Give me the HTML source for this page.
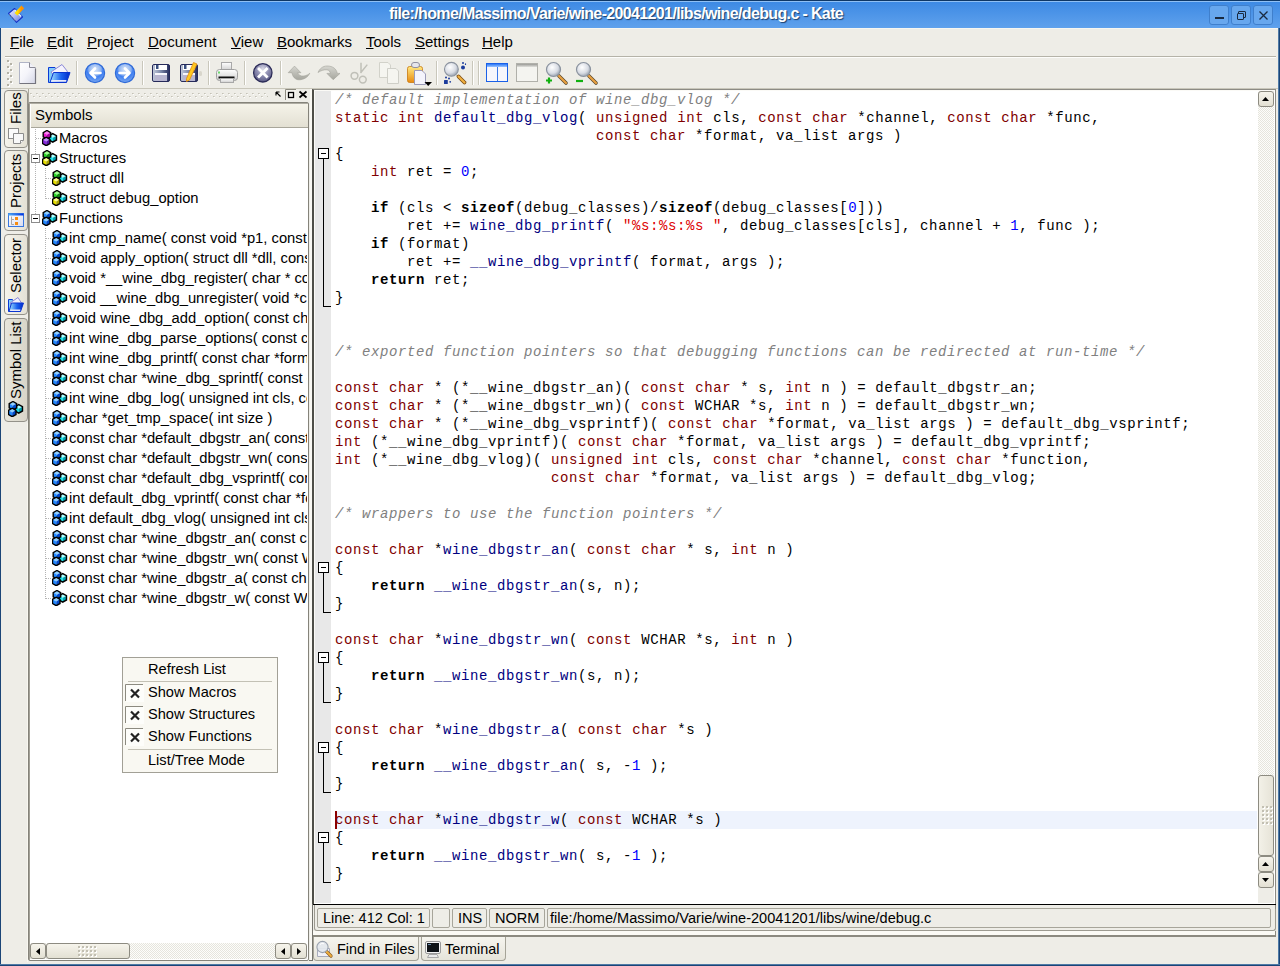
<!DOCTYPE html>
<html><head><meta charset="utf-8">
<style>
*{box-sizing:border-box}
html,body{margin:0;padding:0}
body{width:1280px;height:966px;position:relative;overflow:hidden;background:#eeede7;font-family:"Liberation Sans",sans-serif;font-size:15px;color:#000}
.a{position:absolute}
svg{position:absolute;overflow:visible}
#title{left:0;top:0;width:1280px;height:28px;background:linear-gradient(#3c89e4,#5fa1ec);border-top:1px solid #0e3766}
#title .t{left:389px;top:4px;white-space:nowrap;color:#fff;font-weight:bold;font-size:16px;letter-spacing:-0.64px;text-shadow:1px 1px 1px #1d3f6b}
.tb{top:4px;width:20px;height:20px;border:1px solid #3f7fcc;border-radius:3px;background:#67a7ee}
#menubar span{position:absolute;top:32.6px;white-space:nowrap}
#menubar u{text-decoration:underline;text-underline-offset:1px}
.vsep{position:absolute;top:61px;width:2px;height:24px;border-left:1px solid #c7c5b8;border-right:1px solid #fff}
#code{left:331px;top:91px;width:926px;height:812px;overflow:hidden}
.ln{position:absolute;left:4px;height:18px;white-space:pre;font-family:"Liberation Mono",monospace;font-size:14px;letter-spacing:0.6px;line-height:18px}
.k{color:#800000}.f{color:#000080}.b{font-weight:bold}.n{color:#0000ff}.s{color:#dd0000}.c{color:#808080;font-style:italic}
.vtab{left:4px;width:24px;border:1px solid #94928a;border-radius:4px;background:linear-gradient(90deg,#f6f4ec,#e4e1d5)}
.vtab .l{position:absolute;left:2px;white-space:nowrap;transform-origin:0 0;transform:rotate(-90deg);font-size:15px}
.tr{position:absolute;height:20px;white-space:nowrap;font-size:14.75px;line-height:20px}
.menu span{position:absolute;left:25px;white-space:nowrap;font-size:14.6px}
.sb{border:1px solid #8d8b81;border-radius:3px;background:linear-gradient(#f6f4ec,#e3e0d3)}
.sf{position:absolute;top:908px;height:20px;border:1px solid #a7a59a;border-radius:2px;font-size:14.55px;line-height:18px;padding-left:5px;white-space:nowrap;overflow:hidden}
</style></head><body>
<svg width="0" height="0" style="position:absolute;left:0;top:0"><defs>
<symbol id="cubem" viewBox="0 0 16 16">
<polygon points="10.75,3.60 14.50,5.72 10.75,7.85 7.00,5.72" fill="#b0ffff"/><polygon points="7.00,5.72 10.75,7.85 10.75,12.10 7.00,9.97" fill="#10e4ec"/><polygon points="10.75,7.85 14.50,5.72 14.50,9.97 10.75,12.10" fill="#00a4b0"/><polygon points="10.75,3.60 14.50,5.72 14.50,9.97 10.75,12.10 7.00,9.97 7.00,5.72" fill="none" stroke="#000" stroke-width="1.4" stroke-linejoin="miter"/>
<polygon points="4.95,0.50 8.70,2.62 4.95,4.75 1.20,2.62" fill="#ff80f8"/><polygon points="1.20,2.62 4.95,4.75 4.95,9.00 1.20,6.88" fill="#e818d0"/><polygon points="4.95,4.75 8.70,2.62 8.70,6.88 4.95,9.00" fill="#a800a8"/><polygon points="4.95,0.50 8.70,2.62 8.70,6.88 4.95,9.00 1.20,6.88 1.20,2.62" fill="none" stroke="#000" stroke-width="1.4" stroke-linejoin="miter"/>
<polygon points="4.25,7.20 8.00,9.32 4.25,11.45 0.50,9.32" fill="#c090ff"/><polygon points="0.50,9.32 4.25,11.45 4.25,15.70 0.50,13.57" fill="#8828e0"/><polygon points="4.25,11.45 8.00,9.32 8.00,13.57 4.25,15.70" fill="#5810a8"/><polygon points="4.25,7.20 8.00,9.32 8.00,13.57 4.25,15.70 0.50,13.57 0.50,9.32" fill="none" stroke="#000" stroke-width="1.4" stroke-linejoin="miter"/>
</symbol>
<symbol id="cubes" viewBox="0 0 16 16">
<polygon points="10.75,3.60 14.50,5.72 10.75,7.85 7.00,5.72" fill="#b0ffff"/><polygon points="7.00,5.72 10.75,7.85 10.75,12.10 7.00,9.97" fill="#10e4ec"/><polygon points="10.75,7.85 14.50,5.72 14.50,9.97 10.75,12.10" fill="#00a4b0"/><polygon points="10.75,3.60 14.50,5.72 14.50,9.97 10.75,12.10 7.00,9.97 7.00,5.72" fill="none" stroke="#000" stroke-width="1.4" stroke-linejoin="miter"/>
<polygon points="4.95,0.50 8.70,2.62 4.95,4.75 1.20,2.62" fill="#a0ff90"/><polygon points="1.20,2.62 4.95,4.75 4.95,9.00 1.20,6.88" fill="#28d028"/><polygon points="4.95,4.75 8.70,2.62 8.70,6.88 4.95,9.00" fill="#108810"/><polygon points="4.95,0.50 8.70,2.62 8.70,6.88 4.95,9.00 1.20,6.88 1.20,2.62" fill="none" stroke="#000" stroke-width="1.4" stroke-linejoin="miter"/>
<polygon points="4.25,7.20 8.00,9.32 4.25,11.45 0.50,9.32" fill="#ffff90"/><polygon points="0.50,9.32 4.25,11.45 4.25,15.70 0.50,13.57" fill="#e8e000"/><polygon points="4.25,11.45 8.00,9.32 8.00,13.57 4.25,15.70" fill="#a8a000"/><polygon points="4.25,7.20 8.00,9.32 8.00,13.57 4.25,15.70 0.50,13.57 0.50,9.32" fill="none" stroke="#000" stroke-width="1.4" stroke-linejoin="miter"/>
</symbol>
<symbol id="cubef" viewBox="0 0 16 16">
<polygon points="10.75,3.60 14.50,5.72 10.75,7.85 7.00,5.72" fill="#b0ffff"/><polygon points="7.00,5.72 10.75,7.85 10.75,12.10 7.00,9.97" fill="#10e4ec"/><polygon points="10.75,7.85 14.50,5.72 14.50,9.97 10.75,12.10" fill="#00a4b0"/><polygon points="10.75,3.60 14.50,5.72 14.50,9.97 10.75,12.10 7.00,9.97 7.00,5.72" fill="none" stroke="#000" stroke-width="1.4" stroke-linejoin="miter"/>
<polygon points="4.95,0.50 8.70,2.62 4.95,4.75 1.20,2.62" fill="#90d0ff"/><polygon points="1.20,2.62 4.95,4.75 4.95,9.00 1.20,6.88" fill="#2088ff"/><polygon points="4.95,4.75 8.70,2.62 8.70,6.88 4.95,9.00" fill="#0048c8"/><polygon points="4.95,0.50 8.70,2.62 8.70,6.88 4.95,9.00 1.20,6.88 1.20,2.62" fill="none" stroke="#000" stroke-width="1.4" stroke-linejoin="miter"/>
<polygon points="4.25,7.20 8.00,9.32 4.25,11.45 0.50,9.32" fill="#90d0ff"/><polygon points="0.50,9.32 4.25,11.45 4.25,15.70 0.50,13.57" fill="#2088ff"/><polygon points="4.25,11.45 8.00,9.32 8.00,13.57 4.25,15.70" fill="#0048c8"/><polygon points="4.25,7.20 8.00,9.32 8.00,13.57 4.25,15.70 0.50,13.57 0.50,9.32" fill="none" stroke="#000" stroke-width="1.4" stroke-linejoin="miter"/>
</symbol>
</defs></svg>
<!-- outer frame -->
<div class="a" style="left:0;top:0;width:1px;height:966px;background:#1b4577"></div>
<div class="a" style="left:1278px;top:0;width:2px;height:966px;background:#1b4577;border-left:1px solid #4f7aa6"></div>
<div class="a" style="left:0;top:964px;width:1280px;height:2px;background:#1b4577;border-top:1px solid #4f7aa6"></div>

<div id="title" class="a">
<div class="a" style="left:0;top:0;width:1280px;height:1px;background:#8fc0f5"></div>
<div class="a t">file:/home/Massimo/Varie/wine-20041201/libs/wine/debug.c - Kate</div>
<svg style="left:0;top:0" width="30" height="28" viewBox="0 0 30 28">
<defs><linearGradient id="gBrush" x1="0" y1="0" x2="1" y2="1"><stop offset="0" stop-color="#f0f0ff"/><stop offset="0.45" stop-color="#b8c0f4"/><stop offset="1" stop-color="#5870e0"/></linearGradient>
<linearGradient id="gHandle" x1="0" y1="0" x2="1" y2="0"><stop offset="0" stop-color="#ffe000"/><stop offset="1" stop-color="#ff9000"/></linearGradient></defs>
<path d="M8.5 12.5L14.5 7.5L22.5 16L16.5 21.3Z" fill="url(#gBrush)" stroke="#1434c8" stroke-width="1.1" stroke-linejoin="round"/>
<path d="M15 9L21.2 15.6" stroke="#d8f4ff" stroke-width="1.4"/>
<path d="M9.5 14L16 20.2" stroke="#c8c050" stroke-width="1" stroke-dasharray="1 1.2"/>
<path d="M17.3 11.8L21.5 7.3" stroke="url(#gHandle)" stroke-width="3.8" stroke-linecap="square"/>
</svg>

<div class="a tb" style="left:1209px"></div>
<div class="a tb" style="left:1231px"></div>
<div class="a tb" style="left:1253px"></div>
<div class="a" style="left:1215px;top:16px;width:9px;height:2px;background:#1a2a40"></div>
<div class="a" style="left:1238px;top:10px;width:8px;height:7px;border:1px solid #1a2a40;border-radius:1px"></div>
<div class="a" style="left:1237px;top:12px;width:7px;height:7px;border:1px solid #1a2a40;border-radius:1px;background:#67a7ee"></div>
<svg style="left:1259px;top:10px" width="9" height="9"><path d="M0.5 0.5L8.5 8.5M8.5 0.5L0.5 8.5" stroke="#1a2a40" stroke-width="1.3"/></svg>
</div>
<div class="a" style="left:1px;top:28px;width:1277px;height:1px;background:#f7f6f0"></div>

<div id="menubar">
<span style="left:10px"><u>F</u>ile</span>
<span style="left:47px"><u>E</u>dit</span>
<span style="left:87px"><u>P</u>roject</span>
<span style="left:148px"><u>D</u>ocument</span>
<span style="left:231px"><u>V</u>iew</span>
<span style="left:277px"><u>B</u>ookmarks</span>
<span style="left:366px"><u>T</u>ools</span>
<span style="left:415px"><u>S</u>ettings</span>
<span style="left:482px"><u>H</u>elp</span>
</div>
<div class="a" style="left:5px;top:56px;width:1271px;height:1px;background:#b5b3a8"></div>
<div class="a" style="left:5px;top:57px;width:1271px;height:1px;background:#fdfdfb"></div>

<!-- toolbar -->
<svg style="left:0;top:0" width="620" height="90" viewBox="0 0 620 90">
<defs>
<linearGradient id="gPage" x1="0" y1="0" x2="1" y2="1"><stop offset="0" stop-color="#ffffff"/><stop offset="0.5" stop-color="#f4f4fa"/><stop offset="1" stop-color="#d4d6e6"/></linearGradient>
<radialGradient id="gBlueBall" cx="0.5" cy="0.3" r="0.7"><stop offset="0" stop-color="#dce8fa"/><stop offset="0.45" stop-color="#8fb4f0"/><stop offset="0.6" stop-color="#3f7ff2"/><stop offset="1" stop-color="#7aa8ee"/></radialGradient>
<radialGradient id="gGrayBall" cx="0.5" cy="0.3" r="0.7"><stop offset="0" stop-color="#dcdce8"/><stop offset="0.5" stop-color="#8c8cb0"/><stop offset="1" stop-color="#5a5a84"/></radialGradient>
<linearGradient id="gFloppy" x1="0" y1="0" x2="1" y2="0"><stop offset="0" stop-color="#c4ccdc"/><stop offset="0.5" stop-color="#7c88a8"/><stop offset="1" stop-color="#242c5c"/></linearGradient>
<linearGradient id="gFlap" x1="0" y1="0" x2="1" y2="0"><stop offset="0" stop-color="#a8e8ff"/><stop offset="0.55" stop-color="#1c64f0"/><stop offset="1" stop-color="#0028c8"/></linearGradient>
<linearGradient id="gPrinter" x1="0" y1="0" x2="0" y2="1"><stop offset="0" stop-color="#ffffff"/><stop offset="1" stop-color="#cfcfcf"/></linearGradient>
<linearGradient id="gClip" x1="0" y1="0" x2="0" y2="1"><stop offset="0" stop-color="#ffe880"/><stop offset="1" stop-color="#e88a10"/></linearGradient>
<radialGradient id="gLens" cx="0.4" cy="0.35" r="0.6"><stop offset="0" stop-color="#ffffff"/><stop offset="0.7" stop-color="#d8dce4"/><stop offset="1" stop-color="#a8b0bc"/></radialGradient>
<linearGradient id="gWinBlue" x1="0" y1="0" x2="0" y2="1"><stop offset="0" stop-color="#2a78f8"/><stop offset="1" stop-color="#9cc4ff"/></linearGradient>
<linearGradient id="gWinGray" x1="0" y1="0" x2="0" y2="1"><stop offset="0" stop-color="#9a9a96"/><stop offset="1" stop-color="#e0e0dc"/></linearGradient>
<linearGradient id="gGrayArr" x1="0" y1="0" x2="0" y2="1"><stop offset="0" stop-color="#d6d6d0"/><stop offset="1" stop-color="#a6a69e"/></linearGradient>
</defs>
<!-- grip -->
<g>
<rect x="8" y="61" width="2" height="2" fill="#fff"/><rect x="7" y="60" width="2" height="2" fill="#b4b2a6"/>
<rect x="8" y="67" width="2" height="2" fill="#fff"/><rect x="7" y="66" width="2" height="2" fill="#b4b2a6"/>
<rect x="8" y="73" width="2" height="2" fill="#fff"/><rect x="7" y="72" width="2" height="2" fill="#b4b2a6"/>
<rect x="8" y="79" width="2" height="2" fill="#fff"/><rect x="7" y="78" width="2" height="2" fill="#b4b2a6"/>
<rect x="8" y="85" width="2" height="2" fill="#fff"/><rect x="7" y="84" width="2" height="2" fill="#b4b2a6"/>
<rect x="11" y="64" width="2" height="2" fill="#fff"/><rect x="10" y="63" width="2" height="2" fill="#b4b2a6"/>
<rect x="11" y="70" width="2" height="2" fill="#fff"/><rect x="10" y="69" width="2" height="2" fill="#b4b2a6"/>
<rect x="11" y="76" width="2" height="2" fill="#fff"/><rect x="10" y="75" width="2" height="2" fill="#b4b2a6"/>
<rect x="11" y="82" width="2" height="2" fill="#fff"/><rect x="10" y="81" width="2" height="2" fill="#b4b2a6"/>
</g>
<!-- new -->
<path d="M19.5 62.5H29.5L35.5 68.5V83.5H19.5Z" fill="url(#gPage)" stroke="#b0b4c6"/>
<path d="M35.5 68.5V83.5H19.5" fill="none" stroke="#74747e" stroke-width="1.2"/>
<path d="M29.5 62.5V67.5H35.5" fill="#f2f2f8" stroke="#8a8a96"/>
<!-- open -->
<path d="M48.5 67.5H55L56.5 69.5H59V82.5H48.5Z" fill="#84ccf8" stroke="#0a3ad6"/>
<path d="M51 72L62 64.5L67.5 71.5L57 79Z" fill="#f4f2fc" stroke="#8c8ad8"/>
<path d="M50 82.5L53.5 72.5H70L66.5 82.5Z" fill="url(#gFlap)" stroke="#0a34d0"/>
<path d="M51.5 80H66.5L66 81.8H51Z" fill="#e8e8f8"/>
<!-- sep -->
<rect x="76" y="61" width="1" height="24" fill="#c9c7bb"/><rect x="77" y="61" width="1" height="24" fill="#fff"/>
<!-- back -->
<circle cx="95" cy="73" r="9.6" fill="url(#gBlueBall)" stroke="#2e6ad8" stroke-width="1.2"/>
<path d="M100.5 73H90.5M95 68.5L90.5 73L95 77.5" fill="none" stroke="#fff" stroke-width="2.6" stroke-linecap="round" stroke-linejoin="round"/>
<!-- forward -->
<circle cx="125" cy="73" r="9.6" fill="url(#gBlueBall)" stroke="#2e6ad8" stroke-width="1.2"/>
<path d="M119.5 73H129.5M125 68.5L129.5 73L125 77.5" fill="none" stroke="#fff" stroke-width="2.6" stroke-linecap="round" stroke-linejoin="round"/>
<rect x="142" y="61" width="1" height="24" fill="#c9c7bb"/><rect x="143" y="61" width="1" height="24" fill="#fff"/>
<!-- save -->
<rect x="152.5" y="64.5" width="17" height="17" rx="1.5" fill="url(#gFloppy)" stroke="#262a5a"/>
<rect x="155" y="65" width="12" height="5" fill="#fff"/><rect x="156" y="65" width="2.5" height="4" fill="#3a5080"/>
<rect x="155" y="73" width="12" height="8" fill="#b8b6d0"/><rect x="155" y="73" width="12" height="2" fill="#f6f6fc"/>
<!-- save as -->
<rect x="180.5" y="64.5" width="17" height="17" rx="1.5" fill="url(#gFloppy)" stroke="#262a5a"/>
<rect x="183" y="65" width="12" height="5" fill="#fff"/><rect x="184" y="65" width="2.5" height="4" fill="#3a5080"/>
<rect x="183" y="73" width="12" height="8" fill="#b8b6d0"/><rect x="183" y="73" width="12" height="2" fill="#f6f6fc"/>
<path d="M193.5 62.5L197 64L189.5 80L186.5 81.5L186.5 78.5Z" fill="#ffc820" stroke="#e08a10" stroke-width="0.8"/>
<rect x="199" y="71" width="3" height="5" rx="1.5" fill="#d8d6cc"/>
<rect x="208" y="61" width="1" height="24" fill="#c9c7bb"/><rect x="209" y="61" width="1" height="24" fill="#fff"/>
<!-- print -->
<rect x="221.5" y="62.5" width="10" height="8" fill="url(#gPrinter)" stroke="#a8a8a8"/>
<rect x="216.5" y="69.5" width="21" height="11" rx="3" fill="url(#gPrinter)" stroke="#a0a0a0"/>
<rect x="218.5" y="76.5" width="16" height="2" fill="#111"/>
<rect x="220.5" y="78.5" width="13" height="4" fill="url(#gPrinter)" stroke="#a8a8a8"/>
<rect x="218" y="71.5" width="2" height="2" fill="#6cd86c"/>
<rect x="244" y="61" width="1" height="24" fill="#c9c7bb"/><rect x="245" y="61" width="1" height="24" fill="#fff"/>
<!-- close -->
<circle cx="262.8" cy="72.8" r="9.2" fill="url(#gGrayBall)" stroke="#2c2c58" stroke-width="1.3"/>
<path d="M259 69L266.6 76.6M266.6 69L259 76.6" stroke="#fff" stroke-width="2.8" stroke-linecap="square"/>
<rect x="280" y="61" width="1" height="24" fill="#c9c7bb"/><rect x="281" y="61" width="1" height="24" fill="#fff"/>
<!-- undo -->
<path d="M288.2 72.7L294.5 66.1L300.9 72.7L297.5 72.7C298.5 75 301 76.5 304 76C306.5 75.5 308.5 74.5 309.8 73.2C308 77 304 79.8 299 79.8C295 79.8 292.5 76.5 292 72.7Z" fill="url(#gGrayArr)" stroke="#a2a29a" stroke-width="0.6"/>
<!-- redo -->
<path d="M326.9 73.4L333.2 79.7L340 73.4L337.3 73.4C336.5 69 333 66 327 66C322.5 66 319.5 69 318 72.5C321 70.5 324 69.5 327 69.8C329 70 330 71.5 330.5 73.4Z" fill="url(#gGrayArr)" stroke="#a2a29a" stroke-width="0.6"/>
<!-- cut -->
<g fill="none" stroke="#c0c0b8" stroke-width="1.5">
<path d="M361 62.8V73M367.3 64.6L360.5 73"/>
<circle cx="354.5" cy="75.8" r="3.4"/><circle cx="362.8" cy="79.6" r="3.4"/>
</g>
<!-- copy -->
<path d="M379.5 62.5H388L390.5 65V77.5H379.5Z" fill="#f5f5f0" stroke="#d2d2ca"/>
<path d="M387.5 68.5H396L398.5 71V83.5H387.5Z" fill="#f5f5f0" stroke="#cfcfc8"/>
<!-- paste -->
<rect x="407.5" y="66.5" width="15" height="16" rx="2" fill="url(#gClip)" stroke="#c87810" stroke-width="0.8"/>
<rect x="411.5" y="62.5" width="8" height="5" rx="2.5" fill="#e6e6ec" stroke="#9090a0"/>
<path d="M414.5 70.5H422L425.5 74V84.5H414.5Z" fill="#f4f4fc" stroke="#9a9ab8"/>
<path d="M424.5 82H432L428.2 86Z" fill="#000"/>
<rect x="436" y="61" width="1" height="24" fill="#c9c7bb"/><rect x="437" y="61" width="1" height="24" fill="#fff"/>
<!-- find -->
<path d="M458.5 76.5L464.5 82.5" stroke="#7a4a10" stroke-width="3.8" stroke-linecap="round"/>
<path d="M458.5 76.5L464.5 82.5" stroke="#f0b040" stroke-width="2.2" stroke-linecap="round"/>
<circle cx="451.4" cy="69.3" r="6.9" fill="url(#gLens)" stroke="#8a929e" stroke-width="1.1"/>
<g fill="#1c3c9c"><circle cx="463" cy="67.4" r="2"/><circle cx="463" cy="63" r="1"/><ellipse cx="465.5" cy="64.2" rx="0.6" ry="0.9"/><rect x="444" y="80" width="3.8" height="4" rx="0.5"/><circle cx="446" cy="77.6" r="1"/><circle cx="449" cy="78.6" r="1"/><circle cx="450.2" cy="81.8" r="0.9"/></g>
<rect x="472" y="61" width="1" height="24" fill="#c9c7bb"/><rect x="473" y="61" width="1" height="24" fill="#fff"/>
<rect x="478" y="61" width="1" height="24" fill="#c9c7bb"/><rect x="479" y="61" width="1" height="24" fill="#fff"/>
<!-- split v -->
<rect x="486.5" y="63.5" width="21" height="18" fill="#f6f6fc" stroke="#1a60e8"/>
<rect x="487" y="64" width="20" height="3" fill="url(#gWinBlue)"/>
<rect x="497" y="67" width="1" height="14" fill="#3a78e8"/>
<!-- split h -->
<rect x="516.5" y="63.5" width="21" height="18" fill="#f4f4f0" stroke="#b0b0aa"/>
<rect x="517" y="64" width="20" height="3" fill="url(#gWinGray)"/>
<!-- zoom in -->
<path d="M559 76L566 83" stroke="#5a4a30" stroke-width="3.6" stroke-linecap="round"/>
<path d="M559 76L566 83" stroke="#e8a040" stroke-width="2.2" stroke-linecap="round"/>
<circle cx="553.5" cy="69.5" r="7" fill="url(#gLens)" stroke="#8a929e" stroke-width="1.2"/>
<path d="M549 77.5V83.5M546 80.5H552" stroke="#10b010" stroke-width="2.2"/>
<!-- zoom out -->
<path d="M589 76L596 83" stroke="#5a4a30" stroke-width="3.6" stroke-linecap="round"/>
<path d="M589 76L596 83" stroke="#e8a040" stroke-width="2.2" stroke-linecap="round"/>
<circle cx="583.5" cy="69.5" r="7" fill="url(#gLens)" stroke="#8a929e" stroke-width="1.2"/>
<path d="M576 81H583" stroke="#10b010" stroke-width="2.2"/>
</svg>

<div class="a" style="left:1px;top:88px;width:1277px;height:1px;background:#c9c7bb"></div>

<!-- left side tabs -->
<div class="a vtab" style="top:90px;height:58px"><div class="l" style="top:33px">Files</div></div>
<div class="a vtab" style="top:150px;height:81px"><div class="l" style="top:57px">Projects</div></div>
<div class="a vtab" style="top:234px;height:81px"><div class="l" style="top:58px">Selector</div></div>
<div class="a vtab" style="top:318px;height:104px;background:linear-gradient(90deg,#e8e6dc,#d8d5c8)"><div class="l" style="top:80px">Symbol List</div></div>
<svg style="left:0;top:0" width="30" height="430" viewBox="0 0 30 430">
<defs>
<linearGradient id="gProjBar" x1="0" y1="0" x2="1" y2="0"><stop offset="0" stop-color="#50b0f8"/><stop offset="1" stop-color="#0030e0"/></linearGradient>
<linearGradient id="gProjBody" x1="0" y1="0" x2="1" y2="1"><stop offset="0" stop-color="#ffffff"/><stop offset="1" stop-color="#d8dcf0"/></linearGradient>
<linearGradient id="gFlap2" x1="0" y1="0" x2="1" y2="0"><stop offset="0" stop-color="#a8e8ff"/><stop offset="0.55" stop-color="#1c64f0"/><stop offset="1" stop-color="#0028c8"/></linearGradient>
</defs>
<!-- files -->
<rect x="8.5" y="128.5" width="10" height="10" fill="#fbfbfb" stroke="#8c8c8c"/>
<path d="M13.5 133.5H23.5V140L20.5 143.5H13.5Z" fill="#f8f8f8" stroke="#8c8c8c"/>
<path d="M20.5 143.5V140.5H23.5" fill="#fff" stroke="#8c8c8c"/>
<!-- projects -->
<rect x="8.5" y="213.5" width="15" height="13" fill="url(#gProjBody)" stroke="#3a78e0"/>
<rect x="8.5" y="213.5" width="15" height="2" fill="url(#gProjBar)"/>
<path d="M11.5 216.5V224.5H14M11.5 219.5H14" fill="none" stroke="#a8a8a8"/>
<rect x="15" y="217" width="3" height="3" fill="#f88c10"/><rect x="15" y="222" width="3" height="3" fill="#f88c10"/>
<!-- selector -->
<path d="M8.5 299.5H12.5L13.5 301H16V311.5H8.5Z" fill="#84ccf8" stroke="#0a3ad6"/>
<path d="M10 303L18 297.5L21.5 303L14 308.5Z" fill="#f2f0fc" stroke="#8c8ad8"/>
<path d="M9 311.5L11.5 303H23.5L20.5 311.5Z" fill="url(#gFlap2)" stroke="#0a34d0"/>
<path d="M10.5 309.5H20.5L20 311H10Z" fill="#e8e8f8"/>
</svg>
<svg style="left:8px;top:401px" width="16" height="16"><use href="#cubef"/></svg>

<div class="a" style="left:28px;top:89px;width:1px;height:14px;background:#a9a79c"></div>
<div class="a" style="left:27px;top:423px;width:1px;height:539px;background:#f8f7f0"></div>

<!-- dock header -->
<svg style="left:30px;top:92px" width="238" height="8"><defs><pattern id="pGrip" width="6" height="6" patternUnits="userSpaceOnUse"><rect x="0" y="1" width="1" height="1" fill="#c4c2b6"/><rect x="1" y="2" width="1" height="1" fill="#fff"/><rect x="3" y="4" width="1" height="1" fill="#c4c2b6"/><rect x="4" y="5" width="1" height="1" fill="#fff"/><rect x="1" y="1" width="1" height="1" fill="#d4d2c8"/><rect x="4" y="4" width="1" height="1" fill="#d4d2c8"/></pattern></defs><rect width="238" height="7" fill="url(#pGrip)"/></svg>
<svg style="left:270px;top:88px" width="42" height="14" viewBox="0 0 42 14">
<path d="M6 4L10.5 8.5M6 4V7.5M6 4H9.5" stroke="#000" stroke-width="1.1" fill="none"/>
<rect x="15" y="1" width="11" height="11" fill="#f4f3ee"/>
<path d="M15.5 12V1.5H26" stroke="#8c8a80" fill="none"/>
<rect x="18.5" y="4.5" width="5" height="5" fill="none" stroke="#000" stroke-width="1.3"/>
<path d="M29.5 3.5L36.5 9.5M36.5 3.5L29.5 9.5" stroke="#000" stroke-width="1.7"/>
</svg>


<!-- symbols list -->
<div class="a" style="left:28px;top:102px;width:281px;height:859px;border:1px solid #85837a;border-radius:2px;background:#fff"></div>
<div class="a" style="left:29px;top:103px;width:279px;height:857px;border-top:1px solid #aeaca2;border-left:1px solid #a2a096"></div>
<div class="a" style="left:31px;top:104px;width:277px;height:24px;background:linear-gradient(#f5f3e9,#e3e0d3);border-bottom:1px solid #a8a69a"></div>
<div class="a" style="left:35px;top:104px;font-size:15px;line-height:22px">Symbols</div>
<div class="a" style="left:30px;top:128px;width:277px;height:815px;overflow:hidden">
<div class="a" style="left:5px;top:1px;width:1px;height:25px;background:repeating-linear-gradient(#b4b4b4 0 1px,transparent 1px 2px)"></div>
<div class="a" style="left:5px;top:35px;width:1px;height:51px;background:repeating-linear-gradient(#b4b4b4 0 1px,transparent 1px 2px)"></div>
<div class="a" style="left:15px;top:40px;width:1px;height:31px;background:repeating-linear-gradient(#b4b4b4 0 1px,transparent 1px 2px)"></div>
<div class="a" style="left:15px;top:100px;width:1px;height:371px;background:repeating-linear-gradient(#b4b4b4 0 1px,transparent 1px 2px)"></div>
<div class="a" style="left:6px;top:10px;width:5px;height:1px;background:repeating-linear-gradient(90deg,#b4b4b4 0 1px,transparent 1px 2px)"></div>
<svg style="left:12px;top:2px" width="16" height="16"><use href="#cubem"/></svg>
<div class="tr" style="left:29px;top:0px">Macros</div>
<div class="a" style="left:1px;top:26px;width:9px;height:9px;border:1px solid #8c8c8c;background:#fff"></div>
<div class="a" style="left:3px;top:30px;width:5px;height:1px;background:#000"></div>
<svg style="left:12px;top:22px" width="16" height="16"><use href="#cubes"/></svg>
<div class="tr" style="left:29px;top:20px">Structures</div>
<div class="a" style="left:16px;top:50px;width:5px;height:1px;background:repeating-linear-gradient(90deg,#b4b4b4 0 1px,transparent 1px 2px)"></div>
<svg style="left:22px;top:42px" width="16" height="16"><use href="#cubes"/></svg>
<div class="tr" style="left:39px;top:40px">struct dll</div>
<div class="a" style="left:16px;top:70px;width:5px;height:1px;background:repeating-linear-gradient(90deg,#b4b4b4 0 1px,transparent 1px 2px)"></div>
<svg style="left:22px;top:62px" width="16" height="16"><use href="#cubes"/></svg>
<div class="tr" style="left:39px;top:60px">struct debug_option</div>
<div class="a" style="left:1px;top:86px;width:9px;height:9px;border:1px solid #8c8c8c;background:#fff"></div>
<div class="a" style="left:3px;top:90px;width:5px;height:1px;background:#000"></div>
<svg style="left:12px;top:82px" width="16" height="16"><use href="#cubef"/></svg>
<div class="tr" style="left:29px;top:80px">Functions</div>
<div class="a" style="left:16px;top:110px;width:5px;height:1px;background:repeating-linear-gradient(90deg,#b4b4b4 0 1px,transparent 1px 2px)"></div>
<svg style="left:22px;top:102px" width="16" height="16"><use href="#cubef"/></svg>
<div class="tr" style="left:39px;top:100px">int cmp_name( const void *p1, const void *p2 )</div>
<div class="a" style="left:16px;top:130px;width:5px;height:1px;background:repeating-linear-gradient(90deg,#b4b4b4 0 1px,transparent 1px 2px)"></div>
<svg style="left:22px;top:122px" width="16" height="16"><use href="#cubef"/></svg>
<div class="tr" style="left:39px;top:120px">void apply_option( struct dll *dll, const struct debug_option *opt )</div>
<div class="a" style="left:16px;top:150px;width:5px;height:1px;background:repeating-linear-gradient(90deg,#b4b4b4 0 1px,transparent 1px 2px)"></div>
<svg style="left:22px;top:142px" width="16" height="16"><use href="#cubef"/></svg>
<div class="tr" style="left:39px;top:140px">void *__wine_dbg_register( char * const *channels, int nb )</div>
<div class="a" style="left:16px;top:170px;width:5px;height:1px;background:repeating-linear-gradient(90deg,#b4b4b4 0 1px,transparent 1px 2px)"></div>
<svg style="left:22px;top:162px" width="16" height="16"><use href="#cubef"/></svg>
<div class="tr" style="left:39px;top:160px">void __wine_dbg_unregister( void *channel )</div>
<div class="a" style="left:16px;top:190px;width:5px;height:1px;background:repeating-linear-gradient(90deg,#b4b4b4 0 1px,transparent 1px 2px)"></div>
<svg style="left:22px;top:182px" width="16" height="16"><use href="#cubef"/></svg>
<div class="tr" style="left:39px;top:180px">void wine_dbg_add_option( const char *name, unsigned char set, unsigned char clear )</div>
<div class="a" style="left:16px;top:210px;width:5px;height:1px;background:repeating-linear-gradient(90deg,#b4b4b4 0 1px,transparent 1px 2px)"></div>
<svg style="left:22px;top:202px" width="16" height="16"><use href="#cubef"/></svg>
<div class="tr" style="left:39px;top:200px">int wine_dbg_parse_options( const char *str )</div>
<div class="a" style="left:16px;top:230px;width:5px;height:1px;background:repeating-linear-gradient(90deg,#b4b4b4 0 1px,transparent 1px 2px)"></div>
<svg style="left:22px;top:222px" width="16" height="16"><use href="#cubef"/></svg>
<div class="tr" style="left:39px;top:220px">int wine_dbg_printf( const char *format, ... )</div>
<div class="a" style="left:16px;top:250px;width:5px;height:1px;background:repeating-linear-gradient(90deg,#b4b4b4 0 1px,transparent 1px 2px)"></div>
<svg style="left:22px;top:242px" width="16" height="16"><use href="#cubef"/></svg>
<div class="tr" style="left:39px;top:240px">const char *wine_dbg_sprintf( const char *format, ... )</div>
<div class="a" style="left:16px;top:270px;width:5px;height:1px;background:repeating-linear-gradient(90deg,#b4b4b4 0 1px,transparent 1px 2px)"></div>
<svg style="left:22px;top:262px" width="16" height="16"><use href="#cubef"/></svg>
<div class="tr" style="left:39px;top:260px">int wine_dbg_log( unsigned int cls, const char *channel, const char *func, const char *format, ... )</div>
<div class="a" style="left:16px;top:290px;width:5px;height:1px;background:repeating-linear-gradient(90deg,#b4b4b4 0 1px,transparent 1px 2px)"></div>
<svg style="left:22px;top:282px" width="16" height="16"><use href="#cubef"/></svg>
<div class="tr" style="left:39px;top:280px">char *get_tmp_space( int size )</div>
<div class="a" style="left:16px;top:310px;width:5px;height:1px;background:repeating-linear-gradient(90deg,#b4b4b4 0 1px,transparent 1px 2px)"></div>
<svg style="left:22px;top:302px" width="16" height="16"><use href="#cubef"/></svg>
<div class="tr" style="left:39px;top:300px">const char *default_dbgstr_an( const char *str, int n )</div>
<div class="a" style="left:16px;top:330px;width:5px;height:1px;background:repeating-linear-gradient(90deg,#b4b4b4 0 1px,transparent 1px 2px)"></div>
<svg style="left:22px;top:322px" width="16" height="16"><use href="#cubef"/></svg>
<div class="tr" style="left:39px;top:320px">const char *default_dbgstr_wn( const WCHAR *str, int n )</div>
<div class="a" style="left:16px;top:350px;width:5px;height:1px;background:repeating-linear-gradient(90deg,#b4b4b4 0 1px,transparent 1px 2px)"></div>
<svg style="left:22px;top:342px" width="16" height="16"><use href="#cubef"/></svg>
<div class="tr" style="left:39px;top:340px">const char *default_dbg_vsprintf( const char *format, va_list args )</div>
<div class="a" style="left:16px;top:370px;width:5px;height:1px;background:repeating-linear-gradient(90deg,#b4b4b4 0 1px,transparent 1px 2px)"></div>
<svg style="left:22px;top:362px" width="16" height="16"><use href="#cubef"/></svg>
<div class="tr" style="left:39px;top:360px">int default_dbg_vprintf( const char *format, va_list args )</div>
<div class="a" style="left:16px;top:390px;width:5px;height:1px;background:repeating-linear-gradient(90deg,#b4b4b4 0 1px,transparent 1px 2px)"></div>
<svg style="left:22px;top:382px" width="16" height="16"><use href="#cubef"/></svg>
<div class="tr" style="left:39px;top:380px">int default_dbg_vlog( unsigned int cls, const char *channel, const char *func, const char *format, va_list args )</div>
<div class="a" style="left:16px;top:410px;width:5px;height:1px;background:repeating-linear-gradient(90deg,#b4b4b4 0 1px,transparent 1px 2px)"></div>
<svg style="left:22px;top:402px" width="16" height="16"><use href="#cubef"/></svg>
<div class="tr" style="left:39px;top:400px">const char *wine_dbgstr_an( const char * s, int n )</div>
<div class="a" style="left:16px;top:430px;width:5px;height:1px;background:repeating-linear-gradient(90deg,#b4b4b4 0 1px,transparent 1px 2px)"></div>
<svg style="left:22px;top:422px" width="16" height="16"><use href="#cubef"/></svg>
<div class="tr" style="left:39px;top:420px">const char *wine_dbgstr_wn( const WCHAR *s, int n )</div>
<div class="a" style="left:16px;top:450px;width:5px;height:1px;background:repeating-linear-gradient(90deg,#b4b4b4 0 1px,transparent 1px 2px)"></div>
<svg style="left:22px;top:442px" width="16" height="16"><use href="#cubef"/></svg>
<div class="tr" style="left:39px;top:440px">const char *wine_dbgstr_a( const char *s )</div>
<div class="a" style="left:16px;top:470px;width:5px;height:1px;background:repeating-linear-gradient(90deg,#b4b4b4 0 1px,transparent 1px 2px)"></div>
<svg style="left:22px;top:462px" width="16" height="16"><use href="#cubef"/></svg>
<div class="tr" style="left:39px;top:460px">const char *wine_dbgstr_w( const WCHAR *s )</div>
</div>
<div class="a" style="left:30px;top:943px;width:277px;height:16px;background-color:#f6f6f2;background-image:repeating-conic-gradient(#e6e5dd 0 25%,#fdfdfb 0 50%);background-size:2px 2px"></div>
<div class="a sb" style="left:30px;top:943px;width:16px;height:16px"></div>
<svg style="left:35px;top:947px" width="6" height="9"><path d="M5 1L1 4.5L5 8Z" fill="#000"/></svg>
<div class="a sb" style="left:46px;top:943px;width:84px;height:16px"></div>
<svg style="left:78px;top:946px" width="20" height="12"><rect x="1" y="1" width="2" height="2" fill="#fff"/><rect x="0" y="0" width="2" height="2" fill="#c2bfb2"/><rect x="1" y="5" width="2" height="2" fill="#fff"/><rect x="0" y="4" width="2" height="2" fill="#c2bfb2"/><rect x="1" y="9" width="2" height="2" fill="#fff"/><rect x="0" y="8" width="2" height="2" fill="#c2bfb2"/><rect x="5" y="1" width="2" height="2" fill="#fff"/><rect x="4" y="0" width="2" height="2" fill="#c2bfb2"/><rect x="5" y="5" width="2" height="2" fill="#fff"/><rect x="4" y="4" width="2" height="2" fill="#c2bfb2"/><rect x="5" y="9" width="2" height="2" fill="#fff"/><rect x="4" y="8" width="2" height="2" fill="#c2bfb2"/><rect x="9" y="1" width="2" height="2" fill="#fff"/><rect x="8" y="0" width="2" height="2" fill="#c2bfb2"/><rect x="9" y="5" width="2" height="2" fill="#fff"/><rect x="8" y="4" width="2" height="2" fill="#c2bfb2"/><rect x="9" y="9" width="2" height="2" fill="#fff"/><rect x="8" y="8" width="2" height="2" fill="#c2bfb2"/><rect x="13" y="1" width="2" height="2" fill="#fff"/><rect x="12" y="0" width="2" height="2" fill="#c2bfb2"/><rect x="13" y="5" width="2" height="2" fill="#fff"/><rect x="12" y="4" width="2" height="2" fill="#c2bfb2"/><rect x="13" y="9" width="2" height="2" fill="#fff"/><rect x="12" y="8" width="2" height="2" fill="#c2bfb2"/><rect x="17" y="1" width="2" height="2" fill="#fff"/><rect x="16" y="0" width="2" height="2" fill="#c2bfb2"/><rect x="17" y="5" width="2" height="2" fill="#fff"/><rect x="16" y="4" width="2" height="2" fill="#c2bfb2"/><rect x="17" y="9" width="2" height="2" fill="#fff"/><rect x="16" y="8" width="2" height="2" fill="#c2bfb2"/></svg>
<div class="a sb" style="left:275px;top:943px;width:16px;height:16px"></div>
<svg style="left:280px;top:947px" width="6" height="9"><path d="M5 1L1 4.5L5 8Z" fill="#000"/></svg>
<div class="a sb" style="left:291px;top:943px;width:16px;height:16px"></div>
<svg style="left:296px;top:947px" width="6" height="9"><path d="M1 1L5 4.5L1 8Z" fill="#000"/></svg>


<!-- context menu -->
<div class="a menu" style="left:122px;top:657px;width:156px;height:116px;border:1px solid #a2a096;background:#f9f8f2">
<span style="top:3px">Refresh List</span>
<div class="a" style="left:5px;top:23px;width:144px;height:1px;background:#c3c1b5"></div>
<span style="top:26px">Show Macros</span>
<span style="top:48px">Show Structures</span>
<span style="top:70px">Show Functions</span>
<div class="a" style="left:5px;top:91px;width:144px;height:1px;background:#c3c1b5"></div>
<span style="top:94px">List/Tree Mode</span>
<svg style="left:2px;top:26px" width="22" height="70" viewBox="0 0 22 70">
<g fill="none" stroke="#8c8a80"><path d="M0.5 17V0.5H18"/><path d="M0.5 39V22.5H18"/><path d="M0.5 61V44.5H18"/></g>
<rect x="1" y="1" width="18" height="17" fill="#fdfdfa"/><rect x="1" y="23" width="18" height="17" fill="#fdfdfa"/><rect x="1" y="45" width="18" height="17" fill="#fdfdfa"/>
<g stroke="#222" stroke-width="2.2"><path d="M6 5.5L14 13.5M14 5.5L6 13.5"/><path d="M6 27.5L14 35.5M14 27.5L6 35.5"/><path d="M6 49.5L14 57.5M14 49.5L6 57.5"/></g>
</svg>

</div>

<!-- editor frame -->
<div class="a" style="left:310px;top:89px;width:2px;height:871px;background:#f9f8f3"></div>
<div class="a" style="left:312px;top:89px;width:1px;height:872px;background:#77766f"></div>
<div class="a" style="left:309px;top:960px;width:4px;height:1px;background:#77766f"></div>
<div class="a" style="left:314px;top:905px;width:962px;height:26px;border:1px solid #9d9b91;border-top:none;border-radius:0 0 3px 3px"></div>
<div class="a" style="left:1275px;top:89px;width:1px;height:820px;background:#8c8b84"></div>
<div class="a" style="left:312px;top:89px;width:964px;height:815px;background:#fff;border-top:1px solid #8c8b84;border-left:2px solid #4e4e48;border-right:1px solid #8c8b84"></div>
<div class="a" style="left:314px;top:90px;width:961px;height:1px;background:#fbfaf6"></div>
<div class="a" style="left:314px;top:90px;width:1px;height:814px;background:#fbfaf6"></div>
<div class="a" style="left:315px;top:91px;width:16px;height:812px;background:#e8e8e8"></div>
<div class="a" style="left:337px;top:811px;width:920px;height:18px;background:#eef3fd"></div>
<div id="code" class="a">
<div class="ln" style="top:0px"><span class="c">/* default implementation of wine_dbg_vlog */</span></div>
<div class="ln" style="top:18px"><span class="k">static</span> <span class="k">int</span> <span class="f">default_dbg_vlog</span>( <span class="k">unsigned</span> <span class="k">int</span> cls, <span class="k">const</span> <span class="k">char</span> *channel, <span class="k">const</span> <span class="k">char</span> *func,</div>
<div class="ln" style="top:36px">                             <span class="k">const</span> <span class="k">char</span> *format, va_list args )</div>
<div class="ln" style="top:54px">{</div>
<div class="ln" style="top:72px">    <span class="k">int</span> ret = <span class="n">0</span>;</div>
<div class="ln" style="top:90px"></div>
<div class="ln" style="top:108px">    <span class="b">if</span> (cls &lt; <span class="b">sizeof</span>(debug_classes)/<span class="b">sizeof</span>(debug_classes[<span class="n">0</span>]))</div>
<div class="ln" style="top:126px">        ret += <span class="f">wine_dbg_printf</span>( <span class="s">&quot;%s:%s:%s &quot;</span>, debug_classes[cls], channel + <span class="n">1</span>, func );</div>
<div class="ln" style="top:144px">    <span class="b">if</span> (format)</div>
<div class="ln" style="top:162px">        ret += <span class="f">__wine_dbg_vprintf</span>( format, args );</div>
<div class="ln" style="top:180px">    <span class="b">return</span> ret;</div>
<div class="ln" style="top:198px">}</div>
<div class="ln" style="top:216px"></div>
<div class="ln" style="top:234px"></div>
<div class="ln" style="top:252px"><span class="c">/* exported function pointers so that debugging functions can be redirected at run-time */</span></div>
<div class="ln" style="top:270px"></div>
<div class="ln" style="top:288px"><span class="k">const</span> <span class="k">char</span> * (*__wine_dbgstr_an)( <span class="k">const</span> <span class="k">char</span> * s, <span class="k">int</span> n ) = default_dbgstr_an;</div>
<div class="ln" style="top:306px"><span class="k">const</span> <span class="k">char</span> * (*__wine_dbgstr_wn)( <span class="k">const</span> WCHAR *s, <span class="k">int</span> n ) = default_dbgstr_wn;</div>
<div class="ln" style="top:324px"><span class="k">const</span> <span class="k">char</span> * (*__wine_dbg_vsprintf)( <span class="k">const</span> <span class="k">char</span> *format, va_list args ) = default_dbg_vsprintf;</div>
<div class="ln" style="top:342px"><span class="k">int</span> (*__wine_dbg_vprintf)( <span class="k">const</span> <span class="k">char</span> *format, va_list args ) = default_dbg_vprintf;</div>
<div class="ln" style="top:360px"><span class="k">int</span> (*__wine_dbg_vlog)( <span class="k">unsigned</span> <span class="k">int</span> cls, <span class="k">const</span> <span class="k">char</span> *channel, <span class="k">const</span> <span class="k">char</span> *function,</div>
<div class="ln" style="top:378px">                        <span class="k">const</span> <span class="k">char</span> *format, va_list args ) = default_dbg_vlog;</div>
<div class="ln" style="top:396px"></div>
<div class="ln" style="top:414px"><span class="c">/* wrappers to use the function pointers */</span></div>
<div class="ln" style="top:432px"></div>
<div class="ln" style="top:450px"><span class="k">const</span> <span class="k">char</span> *<span class="f">wine_dbgstr_an</span>( <span class="k">const</span> <span class="k">char</span> * s, <span class="k">int</span> n )</div>
<div class="ln" style="top:468px">{</div>
<div class="ln" style="top:486px">    <span class="b">return</span> <span class="f">__wine_dbgstr_an</span>(s, n);</div>
<div class="ln" style="top:504px">}</div>
<div class="ln" style="top:522px"></div>
<div class="ln" style="top:540px"><span class="k">const</span> <span class="k">char</span> *<span class="f">wine_dbgstr_wn</span>( <span class="k">const</span> WCHAR *s, <span class="k">int</span> n )</div>
<div class="ln" style="top:558px">{</div>
<div class="ln" style="top:576px">    <span class="b">return</span> <span class="f">__wine_dbgstr_wn</span>(s, n);</div>
<div class="ln" style="top:594px">}</div>
<div class="ln" style="top:612px"></div>
<div class="ln" style="top:630px"><span class="k">const</span> <span class="k">char</span> *<span class="f">wine_dbgstr_a</span>( <span class="k">const</span> <span class="k">char</span> *s )</div>
<div class="ln" style="top:648px">{</div>
<div class="ln" style="top:666px">    <span class="b">return</span> <span class="f">__wine_dbgstr_an</span>( s, -<span class="n">1</span> );</div>
<div class="ln" style="top:684px">}</div>
<div class="ln" style="top:702px"></div>
<div class="ln" style="top:720px"><span class="k">const</span> <span class="k">char</span> *<span class="f">wine_dbgstr_w</span>( <span class="k">const</span> WCHAR *s )</div>
<div class="ln" style="top:738px">{</div>
<div class="ln" style="top:756px">    <span class="b">return</span> <span class="f">__wine_dbgstr_wn</span>( s, -<span class="n">1</span> );</div>
<div class="ln" style="top:774px">}</div>
<div class="ln" style="top:792px"></div>
</div>
<div class="a" style="left:335px;top:811px;width:2px;height:18px;background:#8b0000"></div>
<div class="a" style="left:318px;top:148px;width:11px;height:11px;border:1px solid #000;background:#fff"></div>
<div class="a" style="left:321px;top:153px;width:5px;height:1px;background:#000"></div>
<div class="a" style="left:323px;top:159px;width:1px;height:148px;background:#000"></div>
<div class="a" style="left:323px;top:306px;width:8px;height:1px;background:#000"></div>
<div class="a" style="left:318px;top:562px;width:11px;height:11px;border:1px solid #000;background:#fff"></div>
<div class="a" style="left:321px;top:567px;width:5px;height:1px;background:#000"></div>
<div class="a" style="left:323px;top:573px;width:1px;height:40px;background:#000"></div>
<div class="a" style="left:323px;top:612px;width:8px;height:1px;background:#000"></div>
<div class="a" style="left:318px;top:652px;width:11px;height:11px;border:1px solid #000;background:#fff"></div>
<div class="a" style="left:321px;top:657px;width:5px;height:1px;background:#000"></div>
<div class="a" style="left:323px;top:663px;width:1px;height:40px;background:#000"></div>
<div class="a" style="left:323px;top:702px;width:8px;height:1px;background:#000"></div>
<div class="a" style="left:318px;top:742px;width:11px;height:11px;border:1px solid #000;background:#fff"></div>
<div class="a" style="left:321px;top:747px;width:5px;height:1px;background:#000"></div>
<div class="a" style="left:323px;top:753px;width:1px;height:40px;background:#000"></div>
<div class="a" style="left:323px;top:792px;width:8px;height:1px;background:#000"></div>
<div class="a" style="left:318px;top:832px;width:11px;height:11px;border:1px solid #000;background:#fff"></div>
<div class="a" style="left:321px;top:837px;width:5px;height:1px;background:#000"></div>
<div class="a" style="left:323px;top:843px;width:1px;height:40px;background:#000"></div>
<div class="a" style="left:323px;top:882px;width:8px;height:1px;background:#000"></div>
<div class="a" style="left:1258px;top:91px;width:16px;height:812px;background-color:#f6f6f2;background-image:repeating-conic-gradient(#e6e5dd 0 25%,#fdfdfb 0 50%);background-size:2px 2px"></div>
<div class="a" style="left:1258px;top:855px;width:16px;height:48px;background:#eeede7"></div>
<div class="a sb" style="left:1258px;top:91px;width:16px;height:16px"></div>
<svg style="left:1261px;top:96px" width="9" height="6"><path d="M1 5L4.5 1L8 5Z" fill="#000"/></svg>
<div class="a sb" style="left:1258px;top:775px;width:16px;height:81px;background:linear-gradient(90deg,#f3f1e8,#e6e3d7)"></div>
<svg style="left:1262px;top:806px" width="12" height="20"><rect x="1" y="1" width="2" height="2" fill="#fff"/><rect x="0" y="0" width="2" height="2" fill="#c2bfb2"/><rect x="1" y="5" width="2" height="2" fill="#fff"/><rect x="0" y="4" width="2" height="2" fill="#c2bfb2"/><rect x="1" y="9" width="2" height="2" fill="#fff"/><rect x="0" y="8" width="2" height="2" fill="#c2bfb2"/><rect x="1" y="13" width="2" height="2" fill="#fff"/><rect x="0" y="12" width="2" height="2" fill="#c2bfb2"/><rect x="1" y="17" width="2" height="2" fill="#fff"/><rect x="0" y="16" width="2" height="2" fill="#c2bfb2"/><rect x="5" y="1" width="2" height="2" fill="#fff"/><rect x="4" y="0" width="2" height="2" fill="#c2bfb2"/><rect x="5" y="5" width="2" height="2" fill="#fff"/><rect x="4" y="4" width="2" height="2" fill="#c2bfb2"/><rect x="5" y="9" width="2" height="2" fill="#fff"/><rect x="4" y="8" width="2" height="2" fill="#c2bfb2"/><rect x="5" y="13" width="2" height="2" fill="#fff"/><rect x="4" y="12" width="2" height="2" fill="#c2bfb2"/><rect x="5" y="17" width="2" height="2" fill="#fff"/><rect x="4" y="16" width="2" height="2" fill="#c2bfb2"/><rect x="9" y="1" width="2" height="2" fill="#fff"/><rect x="8" y="0" width="2" height="2" fill="#c2bfb2"/><rect x="9" y="5" width="2" height="2" fill="#fff"/><rect x="8" y="4" width="2" height="2" fill="#c2bfb2"/><rect x="9" y="9" width="2" height="2" fill="#fff"/><rect x="8" y="8" width="2" height="2" fill="#c2bfb2"/><rect x="9" y="13" width="2" height="2" fill="#fff"/><rect x="8" y="12" width="2" height="2" fill="#c2bfb2"/><rect x="9" y="17" width="2" height="2" fill="#fff"/><rect x="8" y="16" width="2" height="2" fill="#c2bfb2"/></svg>
<div class="a sb" style="left:1258px;top:856px;width:16px;height:16px"></div>
<svg style="left:1261px;top:861px" width="9" height="6"><path d="M1 5L4.5 1L8 5Z" fill="#000"/></svg>
<div class="a sb" style="left:1258px;top:872px;width:16px;height:16px"></div>
<svg style="left:1261px;top:877px" width="9" height="6"><path d="M1 1L4.5 5L8 1Z" fill="#000"/></svg>

<div class="a" style="left:313px;top:904px;width:963px;height:1px;background:#000"></div>

<!-- status bar -->
<div class="sf" style="left:317px;width:113px">Line: 412 Col: 1</div>
<div class="sf" style="left:432px;width:18px"></div>
<div class="sf" style="left:452px;width:35px">INS</div>
<div class="sf" style="left:489px;width:56px">NORM</div>
<div class="sf" style="left:547px;width:724px;padding-left:2px">file:/home/Massimo/Varie/wine-20041201/libs/wine/debug.c</div>

<!-- bottom tabs -->
<div class="a" style="left:313px;top:931px;width:963px;height:4px;background:#fbfaf5"></div>
<div class="a" style="left:313px;top:935px;width:963px;height:2px;background:#8c8a80"></div>
<div class="a" style="left:1275px;top:931px;width:1px;height:5px;background:#8c8a80"></div>
<div class="a" style="left:313px;top:937px;width:106px;height:24px;border:1px solid #a5a397;border-top:none;border-radius:0 0 4px 4px;background:linear-gradient(#f6f5ef,#e6e4da)"></div>
<div class="a" style="left:337px;top:940px;font-size:14.4px;line-height:18px">Find in Files</div>
<div class="a" style="left:421px;top:937px;width:85px;height:24px;border:1px solid #a5a397;border-top:none;border-radius:0 0 4px 4px;background:linear-gradient(#f6f5ef,#e6e4da)"></div>
<div class="a" style="left:445px;top:940px;font-size:14.4px;line-height:18px">Terminal</div>
<svg style="left:314px;top:939px" width="130" height="22" viewBox="0 0 130 22">
<path d="M3.5 9.5H15.5V17.5H3.5Z" fill="#f2f2f8" stroke="#a8acbc"/>
<path d="M12.5 12.5L17 17" stroke="#8a5a20" stroke-width="3.2" stroke-linecap="round"/>
<path d="M12.5 12.5L17 17" stroke="#f0b040" stroke-width="1.8" stroke-linecap="round"/>
<circle cx="8.5" cy="8" r="5.6" fill="#e4e8ee" fill-opacity="0.92" stroke="#9aa2ae" stroke-width="1.1"/>
<path d="M6 5.5A3 3 0 0 1 10 4.8" stroke="#fff" stroke-width="1" fill="none"/>
<rect x="111.5" y="2.5" width="15" height="12" rx="1.5" fill="#f4f4f4" stroke="#9a9a9a"/>
<rect x="113" y="4" width="12" height="9" fill="#101418"/>
<rect x="114" y="5" width="3" height="1" fill="#6a8aa8"/>
<path d="M115 15.5H123L124.5 18.5H113.5Z" fill="#ececec" stroke="#a8a8a8"/>
</svg>

</body></html>
